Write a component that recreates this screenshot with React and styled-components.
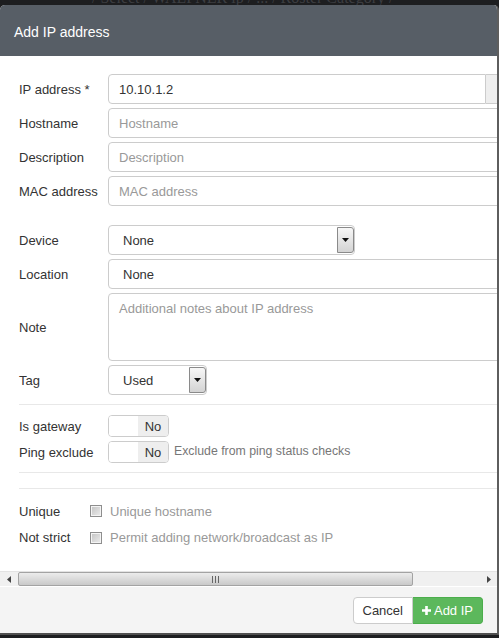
import React from "react";
import styled, { createGlobalStyle } from "styled-components";

const GlobalStyle = createGlobalStyle`
  html, body {
    margin: 0;
    padding: 0;
  }
  body {
    width: 499px;
    height: 638px;
    overflow: hidden;
    background: #1d1e20;
    font-family: "Liberation Sans", Arial, sans-serif;
    font-size: 13px;
    color: #333;
  }
  * {
    box-sizing: border-box;
  }
`;

const Backdrop = styled.div`
  height: 5px;
  overflow: hidden;
  padding-left: 92px;
  white-space: nowrap;
  color: #3c3d41;
  font-family: "Liberation Serif", serif;
  font-size: 16px;
  line-height: 16px;

  span {
    display: block;
    margin-top: -10px;
  }
`;

const Modal = styled.div`
  width: 499px;
  background: #fff;
  border-right: 2px solid #5e5e5e;
  border-bottom: 2px solid #505050;
  border-radius: 5px 5px 0 0;
  overflow: hidden;
`;

const Header = styled.div`
  height: 51px;
  display: flex;
  align-items: center;
  padding: 2px 0 0 14px;
  background: #575e66;
  color: #fff;
  font-size: 14px;
`;

const Body = styled.div`
  height: 530px;
  display: flex;
  flex-direction: column;
`;

const Viewport = styled.div`
  flex: 1;
  overflow: hidden;
`;

const Form = styled.div`
  width: 515px;
  padding: 18px 0 0 19px;
  display: flex;
  flex-direction: column;
`;

const Section = styled.div`
  display: flex;
  flex-direction: column;
  margin-top: ${(p) => p.$top || 0}px;
`;

const Row = styled.div`
  display: flex;
  align-items: center;
  min-height: ${(p) => p.$height || 30}px;
  margin-bottom: 4px;
`;

const Label = styled.div`
  flex: none;
  width: ${(p) => p.$width || 89}px;
  color: #333;
`;

const Control = styled.div`
  flex: 1;
  display: flex;
  align-items: center;
`;

const Input = styled.input`
  flex: 1;
  min-width: 0;
  height: 30px;
  padding: 0 10px;
  border: 1px solid #ccc;
  border-radius: ${(p) => (p.$grouped ? "4px 0 0 4px" : "4px")};
  font-family: inherit;
  font-size: 13px;
  color: #333;
  outline: none;

  &::placeholder {
    color: #999;
  }
`;

const Addon = styled.div`
  flex: none;
  width: 29px;
  height: 30px;
  background: #eee;
  border: 1px solid #ccc;
  border-left: none;
  border-radius: 0 4px 4px 0;
`;

const TextArea = styled.textarea`
  flex: 1;
  height: 68px;
  padding: 7px 10px;
  border: 1px solid #ccc;
  border-radius: 4px;
  resize: none;
  font-family: inherit;
  font-size: 13px;
  line-height: 16px;
  outline: none;

  &::placeholder {
    color: #999;
  }
`;

const SelectBox = styled.div`
  display: flex;
  align-items: stretch;
  height: 30px;
  width: ${(p) => (p.$width ? `${p.$width}px` : "100%")};
  border: 1px solid #ccc;
  border-radius: 4px;
  overflow: hidden;
`;

const SelectValue = styled.div`
  flex: 1;
  display: flex;
  align-items: center;
  padding-left: 14px;
  color: #333;
`;

const SelectArrow = styled.div`
  flex: none;
  width: 17px;
  margin: 1px 0;
  display: flex;
  align-items: center;
  justify-content: center;
  border: 1px solid #8a8a8a;
  border-radius: 0 3px 3px 0;
  background: linear-gradient(#f7f7f7, #d3d3d3);
`;

const Divider = styled.div`
  height: 1px;
  background: #e8e8e8;
  margin: ${(p) => p.$top || 5}px 0 ${(p) => p.$bottom || 10}px;
`;

const Toggle = styled.div`
  display: flex;
  width: 61px;
  height: 22px;
  border: 1px solid #ccc;
  border-radius: 4px;
  overflow: hidden;
`;

const ToggleOff = styled.div`
  flex: 1;
  background: #fff;
`;

const ToggleOn = styled.div`
  width: 30px;
  display: flex;
  align-items: center;
  justify-content: center;
  background: #eee;
  color: #333;
`;

const Help = styled.span`
  margin: -3px 0 0 5px;
  color: #777;
  font-size: 12.3px;
`;

const CheckBox = styled.span`
  flex: none;
  width: 12px;
  height: 12px;
  margin: ${(p) => p.$offset || 0}px 8px 0 0;
  border: 1px solid #8e8e8e;
  background: linear-gradient(135deg, #c2c2c2, #ededed);
  box-shadow: inset 0 0 0 1px #f4f4f4;
`;

const CheckText = styled.span`
  color: #999;
`;

const ScrollBar = styled.div`
  flex: none;
  height: 15px;
  display: flex;
  background: #f0f0f0;
  border-top: 1px solid #e3e3e3;
`;

const ScrollArrow = styled.div`
  flex: none;
  width: 17px;
  display: flex;
  align-items: center;
  justify-content: center;
`;

const Thumb = styled.div`
  flex: none;
  width: 395px;
  margin: 0 1px;
  display: flex;
  align-items: center;
  justify-content: center;
  border: 1px solid #a3a3a3;
  border-radius: 2px;
  background: linear-gradient(#ececec, #c9c9c9);
`;

const Grip = styled.span`
  display: block;
  width: 1px;
  height: 7px;
  margin: 0 1px;
  background: #666;
`;

const Track = styled.div`
  flex: 1;
`;

const Footer = styled.div`
  height: 47px;
  display: flex;
  align-items: center;
  justify-content: flex-end;
  padding-right: 14px;
  background: #f4f4f4;
  border-top: 1px solid #fff;
`;

const Button = styled.button`
  height: 27px;
  display: flex;
  align-items: center;
  gap: 3px;
  padding: 0 ${(p) => (p.$primary ? 9 : 9)}px;
  font-family: inherit;
  font-size: 13px;
  border: 1px solid ${(p) => (p.$primary ? "#4cae4c" : "#ccc")};
  background: ${(p) => (p.$primary ? "#5cb85c" : "#fff")};
  color: ${(p) => (p.$primary ? "#fff" : "#333")};
  border-radius: ${(p) => (p.$primary ? "0 4px 4px 0" : "4px 0 0 4px")};
  border-left-width: ${(p) => (p.$primary ? 0 : 1)}px;
`;

const DownTriangle = () => (
  <svg width="7" height="4" viewBox="0 0 7 4">
    <path d="M0 0h7L3.5 4z" fill="#111" />
  </svg>
);

const SideTriangle = ({ dir }) => (
  <svg width="4" height="7" viewBox="0 0 4 7">
    <path d={dir === "left" ? "M4 0v7L0 3.5z" : "M0 0v7l4-3.5z"} fill="#444" />
  </svg>
);

const PlusIcon = () => (
  <svg width="9" height="9" viewBox="0 0 9 9">
    <path d="M3.2 0h2.6v3.2H9v2.6H5.8V9H3.2V5.8H0V3.2h3.2z" fill="#fff" />
  </svg>
);

const Select = ({ value, width }) => (
  <SelectBox $width={width}>
    <SelectValue>{value}</SelectValue>
    <SelectArrow>
      <DownTriangle />
    </SelectArrow>
  </SelectBox>
);

const Switch = () => (
  <Toggle>
    <ToggleOff />
    <ToggleOn>No</ToggleOn>
  </Toggle>
);

export default function App() {
  return (
    <>
      <GlobalStyle />
      <Backdrop>
        <span>/ Select / WALPNER ip / ... / Roster Category /</span>
      </Backdrop>
      <Modal>
        <Header>Add IP address</Header>
        <Body>
          <Viewport>
            <Form>
              <Section>
                <Row>
                  <Label>IP address *</Label>
                  <Control>
                    <Input $grouped defaultValue="10.10.1.2" />
                    <Addon />
                  </Control>
                </Row>
                <Row>
                  <Label>Hostname</Label>
                  <Control>
                    <Input placeholder="Hostname" />
                  </Control>
                </Row>
                <Row>
                  <Label>Description</Label>
                  <Control>
                    <Input placeholder="Description" />
                  </Control>
                </Row>
                <Row>
                  <Label>MAC address</Label>
                  <Control>
                    <Input placeholder="MAC address" />
                  </Control>
                </Row>
              </Section>

              <Section $top={15}>
                <Row>
                  <Label>Device</Label>
                  <Control>
                    <Select value="None" width={247} />
                  </Control>
                </Row>
                <Row>
                  <Label>Location</Label>
                  <Control>
                    <Select value="None" />
                  </Control>
                </Row>
                <Row $height={68}>
                  <Label>Note</Label>
                  <Control>
                    <TextArea placeholder="Additional notes about IP address" />
                  </Control>
                </Row>
                <Row>
                  <Label>Tag</Label>
                  <Control>
                    <Select value="Used" width={99} />
                  </Control>
                </Row>
              </Section>

              <Divider />

              <Row $height={22}>
                <Label>Is gateway</Label>
                <Control>
                  <Switch />
                </Control>
              </Row>
              <Row $height={22}>
                <Label>Ping exclude</Label>
                <Control>
                  <Switch />
                  <Help>Exclude from ping status checks</Help>
                </Control>
              </Row>

              <Divider />
              <Divider $top={5} $bottom={11} />

              <Row $height={22}>
                <Label $width={71}>Unique</Label>
                <Control>
                  <CheckBox />
                  <CheckText>Unique hostname</CheckText>
                </Control>
              </Row>
              <Row $height={22}>
                <Label $width={71}>Not strict</Label>
                <Control>
                  <CheckBox $offset={2} />
                  <CheckText>Permit adding network/broadcast as IP</CheckText>
                </Control>
              </Row>
            </Form>
          </Viewport>

          <ScrollBar>
            <ScrollArrow>
              <SideTriangle dir="left" />
            </ScrollArrow>
            <Thumb>
              <Grip />
              <Grip />
              <Grip />
            </Thumb>
            <Track />
            <ScrollArrow>
              <SideTriangle dir="right" />
            </ScrollArrow>
          </ScrollBar>
        </Body>
        <Footer>
          <Button>Cancel</Button>
          <Button $primary>
            <PlusIcon />
            Add IP
          </Button>
        </Footer>
      </Modal>
    </>
  );
}
